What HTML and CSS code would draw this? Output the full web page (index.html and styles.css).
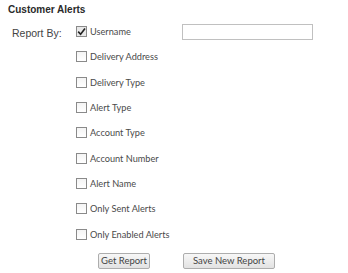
FILE: index.html
```html
<!DOCTYPE html>
<html>
<head>
<meta charset="utf-8">
<link rel="stylesheet" href="styles.css">
</head>
<body>
<div class="page">
  <h1 class="title">Customer Alerts</h1>
  <div class="form">
    <div class="field-label">Report By:</div>
    <div class="options">
      <div class="row">
        <label class="opt opt-wide"><span class="box box-checked"><svg width="9" height="9" viewBox="0 0 9 9"><path d="M1.2 4.6 L3.6 7.2 L8 1.4" fill="none" stroke="#222" stroke-width="1.6"/></svg></span>Username</label>
        <input class="text" type="text">
      </div>
      <div class="row"><label class="opt"><span class="box"></span>Delivery Address</label></div>
      <div class="row"><label class="opt"><span class="box"></span>Delivery Type</label></div>
      <div class="row"><label class="opt"><span class="box"></span>Alert Type</label></div>
      <div class="row"><label class="opt"><span class="box"></span>Account Type</label></div>
      <div class="row"><label class="opt"><span class="box"></span>Account Number</label></div>
      <div class="row"><label class="opt"><span class="box"></span>Alert Name</label></div>
      <div class="row"><label class="opt"><span class="box"></span>Only Sent Alerts</label></div>
      <div class="row"><label class="opt"><span class="box"></span>Only Enabled Alerts</label></div>
    </div>
  </div>
  <div class="actions">
    <button class="btn btn-get">Get Report</button>
    <button class="btn btn-save">Save New Report</button>
  </div>
</div>
</body>
</html>
```
FILE: styles.css
```css
html, body {
  margin: 0;
  padding: 0;
  background: #ffffff;
}
.page {
  padding: 3px 0 0 8px;
  font-family: "Lato", "Liberation Sans", sans-serif;
  color: #3a3a3a;
}
.title {
  margin: 0;
  font-family: "Liberation Sans", Arial, sans-serif;
  font-weight: bold;
  font-size: 10px;
  line-height: 14px;
  color: #2a2a2a;
}
.form {
  display: flex;
  margin-top: 2px;
}
.field-label {
  width: 64px;
  padding-left: 4px;
  padding-top: 2px;
  font-family: "Liberation Sans", Arial, sans-serif;
  font-size: 10.5px;
  line-height: 25px;
  color: #444;
}
.options {
  display: flex;
  flex-direction: column;
}
.row {
  display: flex;
  align-items: center;
  height: 25.3px;
}
.opt {
  display: flex;
  align-items: center;
  font-size: 9.2px;
  color: #4a4a4a;
}
.opt-wide {
  width: 106px;
}
.box {
  width: 9px;
  height: 9px;
  border: 1px solid #8a8a8a;
  background: linear-gradient(#f4f4f4, #ffffff);
  margin-right: 3px;
  display: flex;
  align-items: center;
  justify-content: center;
}
.box-checked {
  background: #e8e8e8;
}
.text {
  box-sizing: border-box;
  width: 131px;
  height: 16px;
  border: 1px solid #c0c0c0;
  padding: 0;
  margin: 0;
  background: #fff;
}
.actions {
  display: flex;
  gap: 33px;
  margin-left: 90px;
  margin-top: 6px;
}
.btn {
  box-sizing: border-box;
  height: 16px;
  padding: 0;
  border: 1px solid #adadad;
  border-radius: 2px;
  background: linear-gradient(#f7f7f7, #e2e2e2);
  font-family: "Lato", "Liberation Sans", sans-serif;
  font-size: 9.5px;
  color: #444;
}
.btn-get { width: 52px; }
.btn-save { width: 92px; }
```
